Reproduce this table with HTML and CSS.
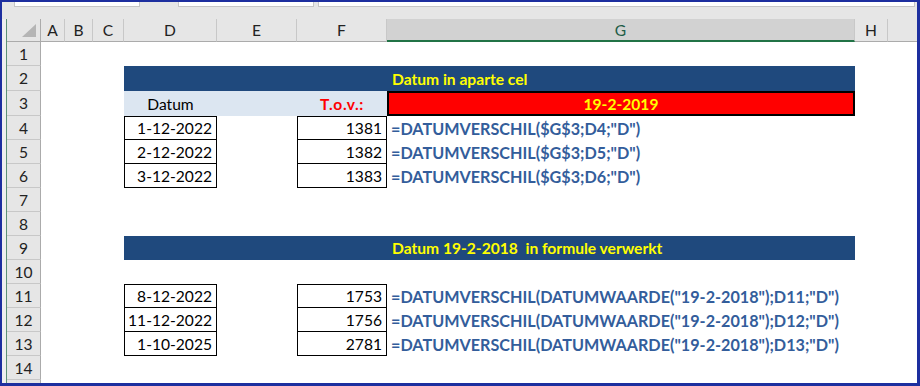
FILE: index.html
```html
<!DOCTYPE html>
<html lang="nl">
<head>
<meta charset="utf-8">
<title>DATUMVERSCHIL</title>
<link rel="stylesheet" href="styles.css">
</head>
<body>
<div class="frame">
  <div class="topbar">
    <div class="box box-name"></div>
    <div class="box box-mid"></div>
    <div class="box box-formula"></div>
  </div>
  <div class="main">
    <div class="edge"></div>
    <div class="sheet">
      <div class="ch corner"><span class="tri"></span></div>
      <div class="ch">A</div>
      <div class="ch">B</div>
      <div class="ch">C</div>
      <div class="ch">D</div>
      <div class="ch">E</div>
      <div class="ch">F</div>
      <div class="ch ch-sel">G</div>
      <div class="ch">H</div>
      <div class="ch ch-rest"></div>

      <div class="rh">1</div>

      <div class="rh">2</div>
      <div class="cell band span-df"></div>
      <div class="cell band col-g">Datum in aparte cel</div>

      <div class="rh">3</div>
      <div class="cell col-d light center">Datum</div>
      <div class="cell col-e light"></div>
      <div class="cell col-f light center tov">T.o.v.:</div>
      <div class="cell col-g refdate">19-2-2019</div>

      <div class="rh">4</div>
      <div class="cell col-d boxed first num">1-12-2022</div>
      <div class="cell col-f boxed first num">1381</div>
      <div class="cell col-g formula">=DATUMVERSCHIL($G$3;D4;"D")</div>

      <div class="rh">5</div>
      <div class="cell col-d boxed num">2-12-2022</div>
      <div class="cell col-f boxed num">1382</div>
      <div class="cell col-g formula">=DATUMVERSCHIL($G$3;D5;"D")</div>

      <div class="rh">6</div>
      <div class="cell col-d boxed num">3-12-2022</div>
      <div class="cell col-f boxed num">1383</div>
      <div class="cell col-g formula">=DATUMVERSCHIL($G$3;D6;"D")</div>

      <div class="rh">7</div>
      <div class="rh">8</div>

      <div class="rh">9</div>
      <div class="cell band span-df"></div>
      <div class="cell band col-g">Datum 19-2-2018  in formule verwerkt</div>

      <div class="rh">10</div>

      <div class="rh">11</div>
      <div class="cell col-d boxed first num">8-12-2022</div>
      <div class="cell col-f boxed first num">1753</div>
      <div class="cell col-g formula">=DATUMVERSCHIL(DATUMWAARDE("19-2-2018");D11;"D")</div>

      <div class="rh">12</div>
      <div class="cell col-d boxed num">11-12-2022</div>
      <div class="cell col-f boxed num">1756</div>
      <div class="cell col-g formula">=DATUMVERSCHIL(DATUMWAARDE("19-2-2018");D12;"D")</div>

      <div class="rh">13</div>
      <div class="cell col-d boxed num">1-10-2025</div>
      <div class="cell col-f boxed num">2781</div>
      <div class="cell col-g formula">=DATUMVERSCHIL(DATUMWAARDE("19-2-2018");D13;"D")</div>

      <div class="rh">14</div>
      <div class="rh rh-last"></div>
    </div>
  </div>
</div>
</body>
</html>
```

FILE: styles.css
```css
* { box-sizing: border-box; margin: 0; padding: 0; }
html, body { background: #fff; }
body {
  margin: 0;
  font-family: Lato, "Liberation Sans", sans-serif;
  font-size: 15.6px;
  color: #000;
}
.frame {
  width: 920px;
  height: 386px;
  border-style: solid;
  border-color: #1d2f9f;
  border-width: 2px 3px 3px 2px;
  display: flex;
  flex-direction: column;
  overflow: hidden;
  background: #fff;
}
.topbar {
  height: 17px;
  flex: none;
  background: #e6e6e6;
  display: flex;
  align-items: flex-start;
  padding-left: 12px;
  padding-right: 2px;
}
.box {
  height: 5px;
  background: #fff;
  border: 1px solid #c6c6c6;
  border-top: none;
}
.box-name { width: 126px; }
.box-mid { width: 136px; margin-left: 38px; }
.box-formula { flex: 1; margin-left: 4px; }

.main { flex: 1; display: flex; min-height: 0; }
.edge {
  width: 5px;
  flex: none;
  background: #efefef;
  border-right: 1px solid #5d9276;
}
.sheet {
  flex: 1;
  display: grid;
  grid-template-columns: 34px 24px 28px 31px 93px 80px 90px 468px 33px 1fr;
  grid-template-rows: 23px 24px 25px 25px repeat(11, 24px) 1fr;
  line-height: 19px;
}
.ch {
  background: #e6e6e6;
  border-right: 1px solid #c8c8c8;
  border-bottom: 1px solid #ababab;
  display: flex;
  align-items: center;
  justify-content: center;
  color: #222;
  padding-top: 1px;
}
.ch-sel {
  background: #d2d2d2;
  color: #1f5d47;
  border-bottom: 2px solid #217346;
}
.ch-rest { border-right: none; }
.corner {
  justify-content: flex-end;
  align-items: flex-end;
  padding: 0 4px 4px 0;
  border-right-color: #ababab;
}
.tri {
  width: 0;
  height: 0;
  border-left: 14px solid transparent;
  border-bottom: 13px solid #b5b5b5;
}
.rh {
  grid-column: 1;
  background: #e6e6e6;
  border-right: 1px solid #ababab;
  border-bottom: 1px solid #c8c8c8;
  display: flex;
  align-items: center;
  justify-content: center;
  color: #222;
  padding-top: 1px;
}
.rh-last { border-bottom: none; }

.cell {
  display: flex;
  align-items: center;
  padding: 1px 4px 0;
  white-space: pre;
}
.col-d { grid-column: 5; }
.col-e { grid-column: 6; }
.col-f { grid-column: 7; }
.col-g { grid-column: 8; }
.span-df { grid-column: 5 / span 3; }

.band {
  background: #1f497d;
  color: #ffff00;
  font-weight: 700;
  padding-left: 5px;
}
.light { background: #dce6f1; }
.center { justify-content: center; }
.tov { color: #ff0000; font-weight: 700; letter-spacing: 0.6px; }
.refdate {
  background: #ff0000;
  border: 2px solid #000;
  color: #ffff00;
  font-weight: 700;
  justify-content: center;
}
.boxed {
  border: 1px solid #000;
  border-top: none;
}
.boxed.first { border-top: 1px solid #000; }
.num { justify-content: flex-end; }
.formula {
  font-weight: 700;
  font-size: 16.2px;
  color: #335d9b;
  padding-left: 4px;
}
```
